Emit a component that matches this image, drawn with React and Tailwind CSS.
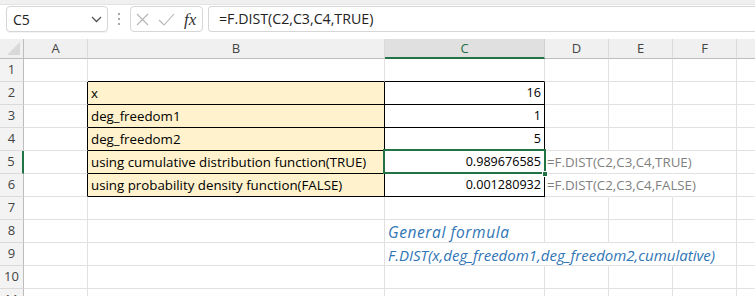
import React from "react";

const COLS = ["A", "B", "C", "D", "E", "F", "G"];
const ROWS = [1, 2, 3, 4, 5, 6, 7, 8, 9, 10, 11];

function inBox(r, c) {
  return (c === "B" || c === "C") && r >= 2 && r <= 6;
}

const noRight = new Set(["D5", "E5", "D6", "E6", "C9", "D9", "E9"]);

function Cell({ r, c }) {
  const id = c + r;
  const box = inBox(r, c);
  const rightBlack = box || (c === "A" && r >= 2 && r <= 6);
  const bottomBlack = box || ((c === "B" || c === "C") && r === 1);
  const hideRight = noRight.has(id);
  let bg = "bg-white";
  if (box && c === "B") bg = "bg-[#fff2cc]";
  const rb = hideRight ? "border-r-transparent" : rightBlack ? "border-r-black" : "border-r-[#e1e1e1]";
  const bb = bottomBlack ? "border-b-black" : "border-b-[#e1e1e1]";

  let content = null;
  let align = "justify-start pl-[3px]";
  const B = {
    2: "x",
    3: "deg_freedom1",
    4: "deg_freedom2",
    5: "using cumulative distribution function(TRUE)",
    6: "using probability density function(FALSE)",
  };
  const C = { 2: "16", 3: "1", 4: "5", 5: "0.989676585", 6: "0.001280932" };
  let color = "text-black";
  let size = "text-[13.3px]";
  let pb = "pb-[2px]";
  if (c === "B" && B[r]) content = B[r];
  if (c === "C" && C[r]) {
    content = C[r];
    align = "justify-end pr-[3px]";
    size = "text-[12.6px]";
  }
  if (c === "D" && r === 5) {
    content = "=F.DIST(C2,C3,C4,TRUE)";
    color = "text-[#7f7f7f]";
    align = "justify-start pl-[2px]";
  }
  if (c === "D" && r === 6) {
    content = "=F.DIST(C2,C3,C4,FALSE)";
    color = "text-[#7f7f7f]";
    align = "justify-start pl-[2px]";
  }
  if (c === "C" && r === 8) {
    content = "General formula";
    color = "text-[#2f75b5] italic tracking-[0.6px]";
    size = "text-[15.5px]";
    pb = "pb-[1px]";
  }
  if (c === "C" && r === 9) {
    content = "F.DIST(x,deg_freedom1,deg_freedom2,cumulative)";
    color = "text-[#2f75b5] italic";
    size = "text-[15px]";
    pb = "pb-[1px]";
  }
  const selected = id === "C5";
  const z = selected ? "z-20" : content ? "z-10" : "";
  return (
    <div
      className={`relative h-[23px] border-r border-b ${rb} ${bb} ${bg} flex items-end ${align} ${pb} ${z}`}
    >
      {content && (
        <span
          className={`whitespace-nowrap ${size} leading-[18px] ${color}`}
          style={{ fontFamily: "'Open Sans', 'Noto Sans', sans-serif" }}
        >
          {content}
        </span>
      )}
      {selected && (
        <>
          <div className="absolute left-[-2px] top-[-2px] right-[-2px] bottom-[-1px] border-2 border-[#217346] pointer-events-none" />
          <div className="absolute right-[-4px] bottom-[-4px] w-[6px] h-[6px] bg-[#217346] border border-white" />
        </>
      )}
    </div>
  );
}

export default function App() {
  return (
    <div
      className="w-[755px] h-[296px] overflow-hidden bg-white"
      style={{ fontFamily: "'Open Sans', 'Noto Sans', sans-serif" }}
    >
      {/* toolbar */}
      <div className="h-[39px] bg-white relative">
        <div className="h-[5px] bg-[#f0f0f0] border-b border-[#e3e3e3]" />
        <div className="flex items-start pt-[1px]">
          <div className="ml-[6px] w-[102px] h-[26px] rounded-[4px] border border-[#d6d6d6] bg-white flex items-center justify-between pl-[6px] pr-[5px] shadow-[0_1px_1px_rgba(0,0,0,0.05)]">
            <span className="text-[14px] text-[#222]">C5</span>
            <svg width="11" height="7" viewBox="0 0 11 7" className="mt-[1px]">
              <path d="M1 1 L5.5 5.5 L10 1" fill="none" stroke="#555" strokeWidth="1.3" />
            </svg>
          </div>
          <div className="w-[22px] h-[26px] flex flex-col items-center justify-center gap-[3px]">
            <div className="w-[2px] h-[2px] bg-[#8a8a8a] rounded-full" />
            <div className="w-[2px] h-[2px] bg-[#8a8a8a] rounded-full" />
            <div className="w-[2px] h-[2px] bg-[#8a8a8a] rounded-full" />
          </div>
          <div className="w-[73px] h-[26px] rounded-[4px] border border-[#d6d6d6] bg-white flex items-center pl-[5px]">
            <svg width="13" height="13" viewBox="0 0 13 13">
              <path d="M1 1 L12 12 M12 1 L1 12" stroke="#b5b5b5" strokeWidth="1.1" fill="none" />
            </svg>
            <svg width="17" height="13" viewBox="0 0 17 13" className="ml-[9px]">
              <path d="M1 7 L6 12 L16 1" stroke="#b5b5b5" strokeWidth="1.1" fill="none" />
            </svg>
            <span
              className="ml-[9px] italic text-[17px] leading-none text-[#333]"
              style={{ fontFamily: "'Liberation Serif', serif" }}
            >
              fx
            </span>
          </div>
          <div className="ml-[5px] flex-1 h-[26px] rounded-l-[4px] border border-r-0 border-[#d6d6d6] bg-white flex items-center pl-[10px]">
            <span className="text-[14.2px] text-[#222]">=F.DIST(C2,C3,C4,TRUE)</span>
          </div>
        </div>
      </div>

      {/* grid */}
      <div className="grid grid-cols-[24px_64px_297px_160px_64px_64px_64px_64px]">
        <div className="h-[20px] bg-[#f0f0f0] border-r border-b border-r-[#bdbdbd] border-b-[#bdbdbd] relative">
          <svg width="13" height="13" viewBox="0 0 13 13" className="absolute right-[3px] bottom-[3px]">
            <path d="M13 0 L13 13 L0 13 Z" fill="#d9d9d9" />
          </svg>
        </div>
        {COLS.map((c) =>
          c === "C" ? (
            <div
              key={c}
              className="h-[20px] bg-[#e0e0e0] border-r border-r-[#d0d0d0] border-b-2 border-b-[#217346] flex items-center justify-center text-[13px] text-[#1e6e42] pt-[1px]"
            >
              {c}
            </div>
          ) : (
            <div
              key={c}
              className="h-[20px] bg-[#f0f0f0] border-r border-b border-r-[#dadada] border-b-[#bdbdbd] flex items-center justify-center text-[13px] text-[#444] pt-[1px]"
            >
              {c}
            </div>
          )
        )}
        {ROWS.map((r) => (
          <React.Fragment key={r}>
            <div
              className={`h-[23px] bg-[#f3f3f3] border-b border-b-[#dadada] border-r ${r === 5 ? "border-r-2 border-r-[#217346] bg-[#e6e6e6]" : "border-r-[#bdbdbd]"} flex items-center justify-center text-[13px] text-[#444]`}
            >
              {r}
            </div>
            {COLS.map((c) => (
              <Cell key={c + r} r={r} c={c} />
            ))}
          </React.Fragment>
        ))}
      </div>
    </div>
  );
}
